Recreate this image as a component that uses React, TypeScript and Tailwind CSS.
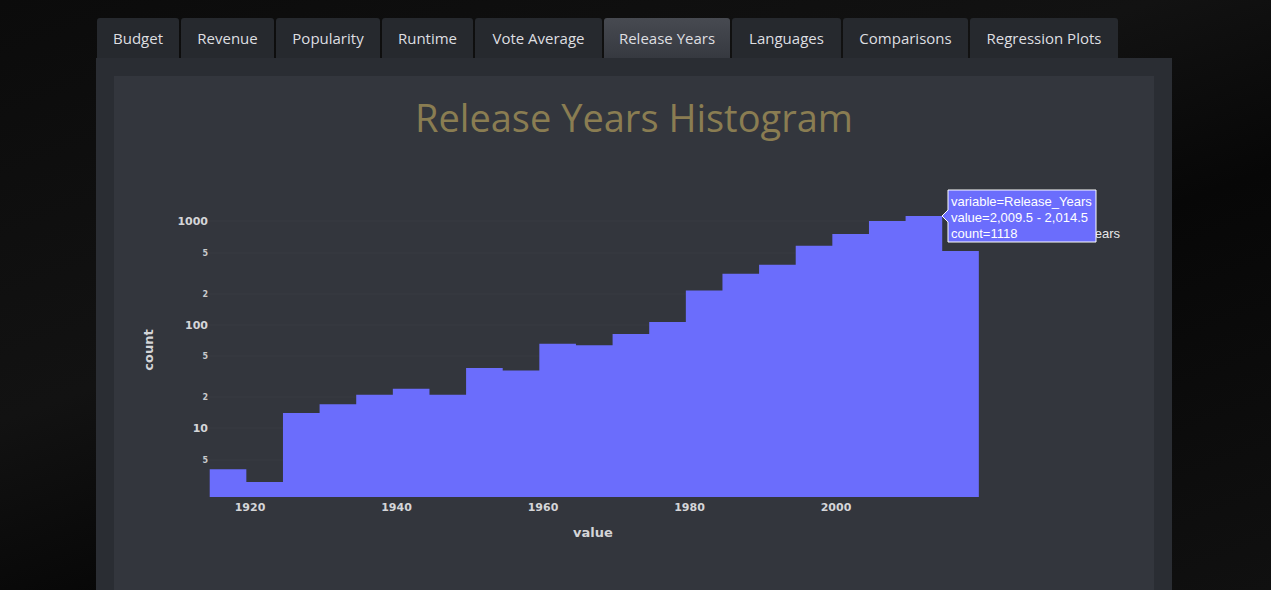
const tabs = [
  { label: "Budget", w: "w-[82px]" },
  { label: "Revenue", w: "w-[93px]" },
  { label: "Popularity", w: "w-[104px]" },
  { label: "Runtime", w: "w-[91px]" },
  { label: "Vote Average", w: "w-[127px]" },
  { label: "Release Years", w: "w-[126px]", active: true },
  { label: "Languages", w: "w-[109px]" },
  { label: "Comparisons", w: "w-[125px]" },
  { label: "Regression Plots", w: "w-[148px]" },
];

// counts per 5-year bin, 1914.5 .. 2019.5
const counts = [4, 3, 14, 17, 21, 24, 21, 38, 36, 65, 63, 81, 106, 213, 309, 377, 575, 748, 1000, 1118, 513];

const BASE_Y = 497;
const xOf = (year: number) => 250 + (year - 1920) * 7.325;
const yOf = (c: number) => 428 - (Math.log10(c) - 1) * 103.5;

const majorTicks = [
  { label: "1000", y: 221 },
  { label: "100", y: 325 },
  { label: "10", y: 428 },
];
const minorTicks = [
  { label: "5", y: 253 },
  { label: "2", y: 294 },
  { label: "5", y: 356 },
  { label: "2", y: 397 },
  { label: "5", y: 460 },
];
const xTicks = [1920, 1940, 1960, 1980, 2000];

function histPath() {
  let d = `M${xOf(1914.5)},${BASE_Y}`;
  counts.forEach((c, i) => {
    const x0 = xOf(1914.5 + i * 5);
    const x1 = xOf(1919.5 + i * 5);
    const y = yOf(c);
    d += ` L${x0},${y} L${x1},${y}`;
  });
  d += ` L${xOf(2019.5)},${BASE_Y} Z`;
  return d;
}

function Histogram() {
  const axisFont = "'DejaVu Sans', Verdana, sans-serif";
  return (
    <svg width={1040} height={450} viewBox="114 140 1040 450" className="block">
      {[...majorTicks, ...minorTicks].map((t, i) => (
        <line key={i} x1={209} x2={977} y1={t.y} y2={t.y} stroke="#383b42" strokeWidth={1} />
      ))}
      <path d={histPath()} fill="#6b6dfc" />

      {majorTicks.map((t) => (
        <text key={t.label} x={208} y={t.y} textAnchor="end" dominantBaseline="central" fill="#d4d5d8" fontSize={11} fontWeight={700} fontFamily={axisFont}>
          {t.label}
        </text>
      ))}
      {minorTicks.map((t, i) => (
        <text key={i} x={208} y={t.y} textAnchor="end" dominantBaseline="central" fill="#c9cacd" fontSize={8} fontWeight={700} fontFamily={axisFont}>
          {t.label}
        </text>
      ))}
      {xTicks.map((yr) => (
        <text key={yr} x={xOf(yr)} y={507} textAnchor="middle" dominantBaseline="central" fill="#d4d5d8" fontSize={11} fontWeight={700} fontFamily={axisFont}>
          {yr}
        </text>
      ))}
      <text x={593} y={532} textAnchor="middle" dominantBaseline="central" fill="#d4d5d8" fontSize={13} fontWeight={700} fontFamily={axisFont}>
        value
      </text>
      <text x={148} y={350} textAnchor="middle" dominantBaseline="central" fill="#d4d5d8" fontSize={13} fontWeight={700} fontFamily={axisFont} transform="rotate(-90 148 350)">
        count
      </text>

      {/* legend, mostly hidden under the hover label */}
      <text x={1120} y={233} textAnchor="end" dominantBaseline="central" fill="#e8e8ea" fontSize={13} fontFamily="'Liberation Sans', Arial, sans-serif">
        Release_Years
      </text>

      {/* hover label */}
      <path d="M942,216 L948,210 V190 H1096 V242 H948 V222 Z" fill="#6b6dfc" stroke="#ffffff" strokeWidth={1} />
      <g fill="#ffffff" fontSize={13} fontFamily="'Liberation Sans', Arial, sans-serif">
        <text x={951} y={201} dominantBaseline="central">variable=Release_Years</text>
        <text x={951} y={217} dominantBaseline="central">value=2,009.5 - 2,014.5</text>
        <text x={951} y={233} dominantBaseline="central">count=1118</text>
      </g>
    </svg>
  );
}

export default function App() {
  return (
    <div className="h-[590px] w-full overflow-hidden bg-[#0b0b0b] bg-[linear-gradient(160deg,#0b0b0b_0%,#121212_40%,#070707_60%,#101010_100%)] font-['Open_Sans',sans-serif]">
      <div className="ml-[96px] w-[1076px] pt-[18px] flex flex-col h-full">
        <div className="flex gap-[2px] pl-[1px] h-[40px]">
          {tabs.map((t) => (
            <div
              key={t.label}
              className={`${t.w} h-full flex items-center justify-center rounded-t-[3px] text-[15px] font-medium text-[#dedfe1] ${
                t.active ? "bg-[linear-gradient(#474a51,#363940)]" : "bg-[#26292e]"
              }`}
            >
              {t.label}
            </div>
          ))}
        </div>
        <div className="flex-1 bg-[#2a2d33] px-[18px] pt-[18px]">
          <div className="h-full bg-[#33363d]">
            <div className="h-[64px] pt-[18px] text-center text-[38px] font-medium leading-[46px] text-[#8a7d52]">
              Release Years Histogram
            </div>
            <Histogram />
          </div>
        </div>
      </div>
    </div>
  );
}
